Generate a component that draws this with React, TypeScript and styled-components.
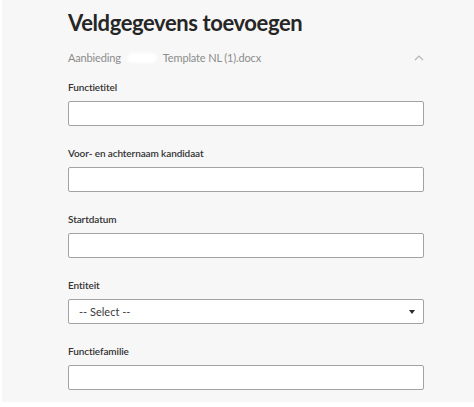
import React from 'react';
import styled, { createGlobalStyle } from 'styled-components';

const GlobalStyle = createGlobalStyle`
  html, body {
    margin: 0;
    padding: 0;
    background: #ffffff;
  }
  body {
    font-family: Lato, "Noto Sans", sans-serif;
    color: #2b2b2b;
  }
`;

interface Field {
  label: string;
  type: 'text' | 'select';
}

const fields: Field[] = [
  { label: 'Functietitel', type: 'text' },
  { label: 'Voor- en achternaam kandidaat', type: 'text' },
  { label: 'Startdatum', type: 'text' },
  { label: 'Entiteit', type: 'select' },
  { label: 'Functiefamilie', type: 'text' },
];

const Panel = styled.section`
  margin-left: 2px;
  width: 472px;
  height: 402px;
  box-sizing: border-box;
  padding: 9px 50px 0 66px;
  background: #f7f7f7;
  overflow: hidden;
`;

const Title = styled.h1`
  margin: 0;
  font-size: 22px;
  line-height: 28px;
  font-weight: 700;
  color: #262626;
  letter-spacing: -0.4px;
`;

const DocRow = styled.div`
  display: flex;
  align-items: center;
  justify-content: space-between;
  margin-top: 14px;
  height: 14px;
`;

const DocName = styled.div`
  display: flex;
  align-items: center;
  font-size: 11px;
  line-height: 14px;
  color: #8c8c8c;
  letter-spacing: -0.15px;
`;

const Redacted = styled.span`
  display: inline-block;
  width: 30px;
  height: 10px;
  margin: 0 6px;
  border-radius: 6px;
  background: #ffffff;
  filter: blur(1.5px);
`;

const Toggle = styled.button`
  display: flex;
  align-items: center;
  justify-content: center;
  width: 14px;
  height: 14px;
  padding: 0;
  margin-right: -2px;
  border: none;
  background: none;
  color: #b5b5b5;
`;

const Form = styled.form`
  display: flex;
  flex-direction: column;
  gap: 20px;
  margin-top: 15px;
`;

const FieldGroup = styled.div`
  display: flex;
  flex-direction: column;
  gap: 7px;
`;

const Label = styled.label`
  font-size: 10px;
  line-height: 14px;
  font-weight: 600;
  color: #333333;
  letter-spacing: -0.1px;
`;

const TextInput = styled.input`
  box-sizing: border-box;
  width: 100%;
  height: 25px;
  margin: 0;
  border: 1px solid #a3a3a3;
  border-radius: 2px;
  background: #ffffff;
  outline: none;
`;

const SelectBox = styled.div`
  box-sizing: border-box;
  display: flex;
  align-items: center;
  justify-content: space-between;
  width: 100%;
  height: 25px;
  padding: 0 8px 0 10px;
  border: 1px solid #a3a3a3;
  border-radius: 2px;
  background: #ffffff;
  font-size: 11px;
  color: #3a3a3a;
`;

const Caret = styled.span`
  width: 0;
  height: 0;
  border-left: 3.5px solid transparent;
  border-right: 3.5px solid transparent;
  border-top: 4px solid #2b2b2b;
`;

const App: React.FC = () => {
  return (
    <>
      <GlobalStyle />
      <Panel>
        <Title>Veldgegevens toevoegen</Title>
        <DocRow>
          <DocName>
            Aanbieding
            <Redacted />
            Template NL (1).docx
          </DocName>
          <Toggle type="button" aria-label="Inklappen">
            <svg width="10" height="6" viewBox="0 0 10 6" fill="none">
              <path d="M1 5L5 1L9 5" stroke="currentColor" strokeWidth="1.2" />
            </svg>
          </Toggle>
        </DocRow>
        <Form>
          {fields.map((field) => (
            <FieldGroup key={field.label}>
              <Label>{field.label}</Label>
              {field.type === 'select' ? (
                <SelectBox>
                  <span>-- Select --</span>
                  <Caret />
                </SelectBox>
              ) : (
                <TextInput type="text" />
              )}
            </FieldGroup>
          ))}
        </Form>
      </Panel>
    </>
  );
};

export default App;
